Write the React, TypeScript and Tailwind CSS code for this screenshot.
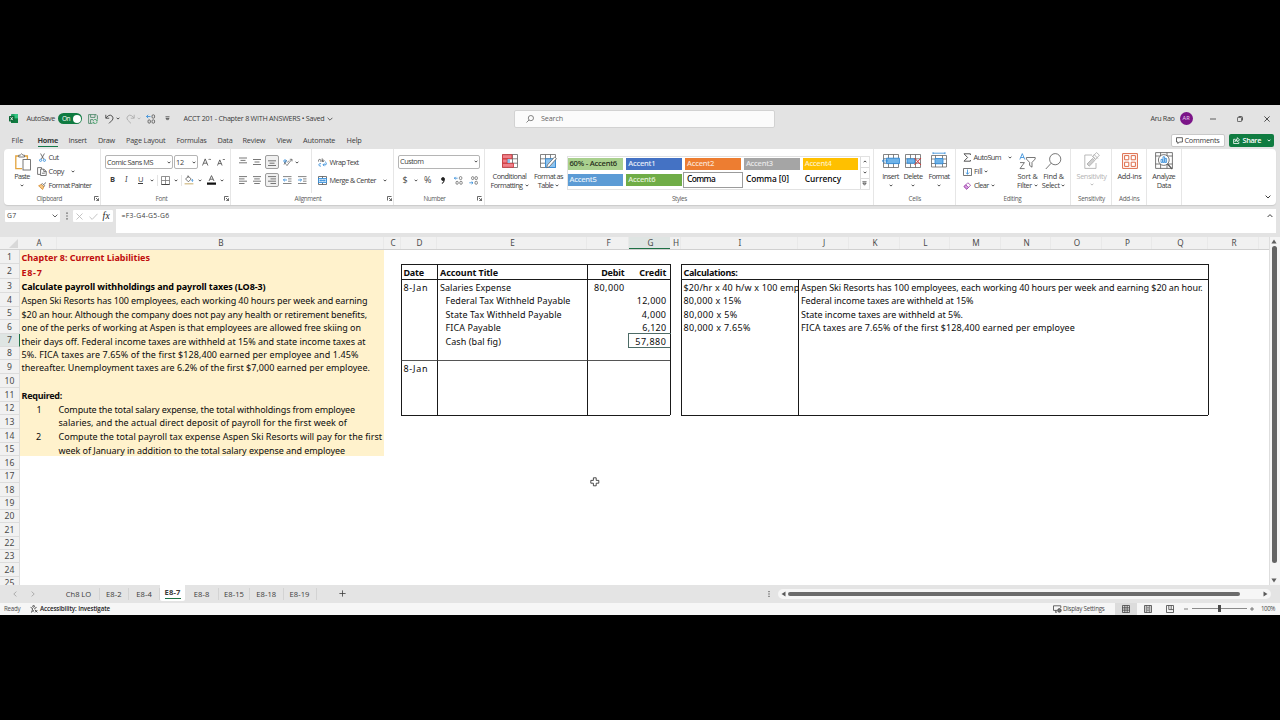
import { useLayoutEffect, useRef } from "react";
import type { ReactNode } from "react";
import clsx from "clsx";

type LabelProps = { children: string; w: number; className?: string };

// One line of text, tracked so that it takes exactly `w` pixels
function Label({ children, w, className }: LabelProps) {
  const inner = useRef<HTMLSpanElement>(null);

  useLayoutEffect(() => {
    const el = inner.current;
    if (!el) return;
    el.style.letterSpacing = "0px";
    const natural = el.getBoundingClientRect().width;
    el.style.letterSpacing = `${(w - natural) / children.length}px`;
  }, [children, w]);

  return (
    <span className={clsx("block shrink-0 whitespace-pre", className)} style={{ width: w }}>
      <span ref={inner}>{children}</span>
    </span>
  );
}

type IconProps = { w: number; h: number; className?: string; children: ReactNode };

function Icon({ w, h, className, children }: IconProps) {
  return (
    <svg
      width={w}
      height={h}
      viewBox={`0 0 ${w} ${h}`}
      fill="none"
      stroke="currentColor"
      strokeWidth="0.8"
      className={clsx("block shrink-0", className)}
    >
      {children}
    </svg>
  );
}

function Chevron({ className }: { className?: string }) {
  return (
    <Icon w={4} h={3} className={className}>
      <path d="M0.6 0.7 2 2.1 3.4 0.7" strokeWidth="0.9" />
    </Icon>
  );
}

function Launcher() {
  return (
    <Icon w={5} h={5} className="text-[#444]">
      <path d="M0.5 4.5V0.5H4.5M2 2 4.5 4.5M4.6 2.2V4.6H2.2" />
    </Icon>
  );
}

/* ---------- Title bar ---------- */

function TitleBar() {
  return (
    <div className="flex h-[27px] items-center text-[7.2px] text-[#3c3c3c]">
      <div className="flex w-[513.5px] items-center pl-[9px]">
        <Icon w={9} h={9} className="text-white">
          <rect x="2" y="0" width="7" height="9" rx="0.8" fill="#21a366" stroke="none" />
          <path d="M5.5 0H9V4.5H5.5z" fill="#33c481" stroke="none" />
          <path d="M2 4.5H9V9H2z" fill="#107c41" stroke="none" />
          <rect x="0" y="2" width="5.4" height="5.4" rx="0.6" fill="#0b6634" stroke="none" />
          <path d="M1.6 3.2 3.8 6.2M3.8 3.2 1.6 6.2" />
        </Icon>
        <Label w={28.5} className="ml-[8.5px]">AutoSave</Label>
        <div className="ml-[3px] flex h-[11px] w-[24px] items-center justify-between rounded-full bg-[#0f7b41] pr-[1.5px] pl-[4px]">
          <Label w={8} className="text-[6.5px] text-white">On</Label>
          <div className="size-[8px] rounded-full bg-white" />
        </div>
        <Icon w={10} h={10} className="ml-[6px] text-[#3d7f5c]">
          <path d="M0.6 0.6H8.2L9.4 1.8V5M0.6 0.6V9.4H4M2.6 0.8V3.4H7V0.8M2.6 9V5.6H5" />
          <path d="M5 7.2a2.1 2.1 0 0 1 4-0.6M9.2 7.6a2.1 2.1 0 0 1-4 0.8M9.2 5.2V6.8H7.8M5 9.8V8.3H6.4" stroke="#3a9b62" />
        </Icon>
        <Icon w={9} h={10} className="ml-[6.5px] text-[#444]">
          <path d="M0.8 0.8V4.2H4.2M0.9 4 3.2 1.8A3 3 0 0 1 7.4 6L4 9.4" strokeWidth="0.9" />
        </Icon>
        <Chevron className="ml-[2px]" />
        <Icon w={9} h={10} className="ml-[6px] text-[#adadad]">
          <path d="M8.2 0.8V4.2H4.8M8.1 4 5.8 1.8A3 3 0 0 0 1.6 6L5 9.4" strokeWidth="0.9" />
        </Icon>
        <Chevron className="ml-[2px] text-[#b5b5b5]" />
        <Icon w={10} h={10} className="ml-[5.5px] text-[#555]">
          <path d="M0.5 2.5H4.5M2.2 0.8 0.5 2.5 2.2 4.2" stroke="#2b88d8" />
          <rect x="6" y="0.8" width="2.6" height="3.4" rx="1.2" />
          <rect x="2" y="5.8" width="2.4" height="3.4" rx="1.2" />
          <rect x="6" y="5.8" width="2.6" height="3.4" rx="1.2" />
        </Icon>
        <Icon w={5} h={5} className="ml-[8.5px]">
          <path d="M0.5 0.8H4.5M1 2.6 2.5 4.1 4 2.6z" />
        </Icon>
        <Label w={141} className="ml-[14px]">ACCT 201 - Chapter 8 WITH ANSWERS • Saved</Label>
        <Icon w={6} h={4} className="ml-[2px]">
          <path d="M0.6 0.8 3 3.2 5.4 0.8" />
        </Icon>
      </div>

      <div className="flex h-[18px] w-[261.5px] items-center rounded-[2px] border border-[#d2d2d2] bg-[#fbfbfb] pl-[11px] text-[#666]">
        <Icon w={8} h={8}>
          <circle cx="4.9" cy="3.1" r="2.6" />
          <path d="M3 5 0.5 7.5" />
        </Icon>
        <Label w={22} className="ml-[7.5px]">Search</Label>
      </div>

      <div className="ml-auto flex items-center pr-[10.5px]">
        <Label w={24}>Aru Rao</Label>
        <div className="ml-[5px] flex size-[13.5px] items-center justify-center rounded-full bg-[#7b1588]">
          <Label w={7.5} className="text-[5.6px] text-[#ecd5f0]">AR</Label>
        </div>
        <Icon w={6} h={6} className="ml-[17px]">
          <path d="M0 3H6" />
        </Icon>
        <Icon w={6} h={6} className="ml-[20.5px]">
          <rect x="0.4" y="1.4" width="4.2" height="4.2" rx="0.8" />
          <path d="M1.6 0.5H4.4Q5.5 0.5 5.5 1.6V4.4" />
        </Icon>
        <Icon w={6} h={6} className="ml-[21px]">
          <path d="M0.4 0.4 5.6 5.6M5.6 0.4 0.4 5.6" strokeWidth="0.9" />
        </Icon>
      </div>
    </div>
  );
}

/* ---------- Ribbon tabs ---------- */

const ribbonTabs = [
  { name: "File", w: 12, slot: 26 },
  { name: "Home", w: 20.5, slot: 31 },
  { name: "Insert", w: 18, slot: 29.5 },
  { name: "Draw", w: 17, slot: 28 },
  { name: "Page Layout", w: 39.5, slot: 50.5 },
  { name: "Formulas", w: 30, slot: 41 },
  { name: "Data", w: 15, slot: 25 },
  { name: "Review", w: 22.8, slot: 34 },
  { name: "View", w: 15.3, slot: 26.5 },
  { name: "Automate", w: 32.3, slot: 43.5 },
  { name: "Help", w: 15.2, slot: 20 },
];

function RibbonTabs() {
  return (
    <div className="flex h-[17px] items-center text-[7.3px] text-[#3c3c3c]">
      <nav className="flex h-full pl-[11.5px]">
        {ribbonTabs.map((tab) => (
          <div key={tab.name} className="pt-[3px]" style={{ width: tab.slot }}>
            <div
              className={clsx("h-[12px] w-fit leading-[11.5px]", tab.name === "Home" && "border-b-[1.3px] border-[#16794a] font-bold")}
            >
              <Label w={tab.w}>{tab.name}</Label>
            </div>
          </div>
        ))}
      </nav>
      <div className="ml-auto flex items-center gap-[4.5px] pr-[6.5px]">
        <div className="flex h-[13px] w-[53.5px] items-center rounded-[2px] border border-[#c9c9c9] bg-white pl-[4px]">
          <Icon w={7} h={7}>
            <path d="M0.5 0.7H6.4V5H3.4L1.9 6.5V5H0.5z" />
          </Icon>
          <Label w={35} className="ml-[1.5px]">Comments</Label>
        </div>
        <div className="flex h-[13.5px] w-[44.5px] items-center rounded-[2px] bg-[#107c41] pl-[4px] text-white">
          <Icon w={7} h={7}>
            <path d="M2.5 2.3H0.6V6.5H5.8V4.8M2 4.7Q2.2 2.4 4.2 2.2V0.7L6.6 2.8 4.2 4.8V3.4Q2.8 3.4 2 4.7z" />
          </Icon>
          <Label w={18.5} className="ml-[2.5px] font-semibold">Share</Label>
          <Chevron className="ml-[5.5px]" />
        </div>
      </div>
    </div>
  );
}

/* ---------- Ribbon ---------- */

type GroupProps = {
  className: string;
  label?: string;
  labelWidth?: number;
  labelClass?: string;
  launcher?: boolean;
  children: ReactNode;
};

function Group({ className, label, labelWidth = 0, labelClass, launcher, children }: GroupProps) {
  return (
    <div className={clsx("flex shrink-0 flex-col border-r border-[#e6e6e6]", className)}>
      <div className="flex h-[44px]">{children}</div>
      <div className="flex h-[11px] items-center pr-[1.5px] text-[6.3px] text-[#5c5c5c]">
        {label && (
          <Label w={labelWidth} className={labelClass}>
            {label}
          </Label>
        )}
        {launcher && (
          <div className="ml-auto">
            <Launcher />
          </div>
        )}
      </div>
    </div>
  );
}

function ClipboardGroup() {
  return (
    <Group className="w-[97px]" label="Clipboard" labelWidth={25.5} labelClass="ml-[32.5px]" launcher>
      <div className="flex w-[33px] flex-col items-center pt-[4px] pl-[5px]">
        <Icon w={16} h={18} className="text-[#555]">
          <path d="M7 15.6H0.8V3H3.6M9.6 3H12.4V6" stroke="#e3a33b" strokeWidth="1.3" />
          <path d="M3.7 4V2.2H5.2Q6.6-0.6 8 2.2H9.5V4z" fill="#fff" />
          <rect x="8" y="6.6" width="7.4" height="10.4" fill="#fff" />
        </Icon>
        <Label w={15.5} className="mt-[1px] -ml-[2px] leading-[9px]">Paste</Label>
        <Chevron className="mt-[2.5px] -ml-[2px]" />
      </div>
      <div className="flex flex-col pt-[1.5px]">
        <div className="flex h-[14.5px] items-center">
          <Icon w={7} h={9} className="ml-[2px] text-[#555]">
            <path d="M1.6 0.5 4.6 6M5.4 0.5 2.4 6" />
            <circle cx="1.6" cy="7.3" r="1.1" stroke="#2b88d8" />
            <circle cx="5.4" cy="7.3" r="1.1" stroke="#2b88d8" />
          </Icon>
          <Label w={10} className="ml-[2.5px]">Cut</Label>
        </div>
        <div className="flex h-[14.5px] items-center">
          <Icon w={10} h={9} className="text-[#555]">
            <path d="M3.4 7.4H0.6V0.6H4.6V2" />
            <path d="M3.6 2.2H7L9.2 4.4V8.5H3.6zM6.8 2.2V4.6H9.2M5 6.2H7.8" />
          </Icon>
          <Label w={15.5} className="ml-[1.5px]">Copy</Label>
          <Chevron className="ml-[7px]" />
        </div>
        <div className="flex h-[14.5px] items-center">
          <Icon w={9} h={8} className="ml-[1px] text-[#555]">
            <path d="M0.6 3.8 3.4 2.4 5.8 4.8 4.6 7.5z" fill="#f5c98a" stroke="#d88a2a" />
            <path d="M3.4 2.4 4.4 1.6 6.6 3.8 5.8 4.8M5.6 2.7 8 0.5" />
          </Icon>
          <Label w={43} className="ml-[1.5px]">Format Painter</Label>
        </div>
      </div>
    </Group>
  );
}

function FontGroup() {
  return (
    <Group className="w-[130px]" label="Font" labelWidth={12} labelClass="ml-[54.5px]" launcher>
      <div className="flex flex-col pt-[6px] pl-[4px]">
        <div className="flex h-[14px] items-center">
          <div className="flex h-[13.5px] w-[67.5px] items-center rounded-[2px] border border-[#b5b5b5] pl-[1px]">
            <Label w={46}>Comic Sans MS</Label>
            <Chevron className="ml-auto mr-[1px]" />
          </div>
          <div className="ml-[1.5px] flex h-[13.5px] w-[23.5px] items-center rounded-[2px] border border-[#b5b5b5] pl-[1px]">
            <Label w={8}>12</Label>
            <Chevron className="ml-auto mr-[1px]" />
          </div>
          <Icon w={9} h={8} className="ml-[4px] text-[#444]">
            <path d="M0.5 7.5 3.2 0.9 5.9 7.5M1.5 5.2H4.9M6.6 2 7.7 0.9 8.8 2" />
          </Icon>
          <Icon w={8} h={8} className="ml-[6px] text-[#444]">
            <path d="M0.5 7.5 2.8 1.9 5.1 7.5M1.3 5.6H4.3M5.8 1 6.8 2 7.8 1" />
          </Icon>
        </div>
        <div className="mt-[4px] flex h-[14px] items-center text-[7.6px]">
          <Label w={5} className="ml-[5px] font-bold">B</Label>
          <Label w={3.5} className="ml-[10px] font-serif italic">I</Label>
          <Label w={5} className="ml-[9.5px] underline">U</Label>
          <Chevron className="ml-[6.5px]" />
          <div className="ml-[3px] h-[11px] w-px bg-[#e4e4e4]" />
          <Icon w={9} h={9} className="ml-[3px] text-[#777]">
            <path d="M0.5 0.5H8.5V8.5H0.5zM4.5 0.5V8.5M0.5 4.5H8.5" />
            <path d="M0.5 8.5H8.5" stroke="#333" />
          </Icon>
          <Chevron className="ml-[4px]" />
          <div className="ml-[3px] h-[11px] w-px bg-[#e4e4e4]" />
          <Icon w={10} h={10} className="ml-[2px] text-[#555]">
            <path d="M1.6 4 4.4 1.2 7.2 4 4.4 6.8zM4 0.4V3" />
            <path d="M8.4 4.4Q9.6 6.2 8.4 6.4T8.4 4.4" stroke="#2b88d8" />
            <path d="M0.6 8.8H9.4" stroke="#d9c79b" strokeWidth="1.4" />
          </Icon>
          <Chevron className="ml-[4px]" />
          <Icon w={9} h={10} className="ml-[5px] text-[#444]">
            <path d="M2 6 4.5 0.6 7 6M2.9 4.2H6.1" />
            <path d="M0 8.7H9" stroke="#111" strokeWidth="2.2" />
          </Icon>
          <Chevron className="ml-[4.5px]" />
        </div>
      </div>
    </Group>
  );
}

function Lines({ d, className }: { d: string; className?: string }) {
  return (
    <Icon w={8} h={8} className={clsx("text-[#555]", className)}>
      <path d={d} />
    </Icon>
  );
}

function AlignmentGroup() {
  return (
    <Group className="w-[163px]" label="Alignment" labelWidth={27} labelClass="ml-[63.5px]" launcher>
      <div className="flex w-[81px] flex-col border-r border-[#e6e6e6] pt-[5.5px] pl-[8px]">
        <div className="flex h-[15px] items-center">
          <Lines d="M0 1H8M1.5 3.4H6.5M0 5.8H8" className="-mt-[3px]" />
          <Lines d="M0 1.5H8M1.5 4H6.5M0 6.5H8" className="ml-[6px]" />
          <div className="ml-[4px] flex size-[13.5px] items-center justify-center rounded-[2px] border border-[#9e9e9e] bg-[#f0f0f0]">
            <Lines d="M0 2.8H8M1.5 5.2H6.5M0 7.5H8" />
          </div>
          <Icon w={10} h={9} className="ml-[4.5px] text-[#666]">
            <path d="M1 6.6 3.6 2M3.4 6.8 1.2 4M4.2 4.6 6 2.6M8.8 1.4 3.6 8M6.8 1.3H9V3.4" />
            <circle cx="2" cy="3" r="1.2" stroke="#2b88d8" />
          </Icon>
          <Chevron className="ml-[2px]" />
        </div>
        <div className="mt-[3px] flex h-[15px] items-center">
          <Lines d="M0 0.6H8M0 2.9H5.5M0 5.2H8M0 7.5H5.5" />
          <Lines d="M0 0.6H8M1.2 2.9H6.8M0 5.2H8M1.2 7.5H6.8" className="ml-[6px]" />
          <div className="ml-[4px] flex size-[13.5px] items-center justify-center rounded-[2px] border border-[#9e9e9e] bg-[#f0f0f0]">
            <Lines d="M0 0.6H8M2.5 2.9H8M0 5.2H8M2.5 7.5H8" />
          </div>
          <Icon w={9} h={8} className="ml-[4.5px] text-[#666]">
            <path d="M0 0.6H8.5M5 2.9H8.5M5 5.2H8.5M0 7.5H8.5" />
            <path d="M0.4 4H4M1.8 2.6 0.4 4 1.8 5.4" stroke="#2b88d8" />
          </Icon>
          <Icon w={9} h={8} className="ml-[5.5px] text-[#666]">
            <path d="M0 0.6H8.5M5 2.9H8.5M5 5.2H8.5M0 7.5H8.5" />
            <path d="M0 4H3.6M2.2 2.6 3.6 4 2.2 5.4" stroke="#2b88d8" />
          </Icon>
        </div>
      </div>
      <div className="flex flex-col pt-[5.5px] pl-[6px]">
        <div className="flex h-[15px] items-center">
          <Icon w={9} h={9} className="text-[#555]">
            <path d="M0.6 3.6V2.2Q0.6 1.4 1.6 1.4T2.8 2.2V3.8M4.2 0.4V3.8M4.2 2.6Q5.8 1.2 6 2.6T4.2 3.4" />
            <path d="M3 5.6Q0.8 5.4 0.8 6.8T3 8.2M5 6.8H8Q9 4.4 7 3.6M6.4 5.4 5 6.8 6.4 8.2" stroke="#2b88d8" />
          </Icon>
          <Label w={29} className="ml-[2.5px]">Wrap Text</Label>
        </div>
        <div className="mt-[3px] flex h-[15px] items-center">
          <Icon w={9} h={9} className="text-[#555]">
            <path d="M0.5 0.5H8.5V8.5H0.5zM4.5 0.5V2.5M4.5 6.5V8.5" />
            <rect x="0.5" y="2.5" width="8" height="4" fill="#cfe5f7" stroke="#2b88d8" />
            <path d="M2 4.5H7M3 3.5 2 4.5 3 5.5M6 3.5 7 4.5 6 5.5" stroke="#2b88d8" />
          </Icon>
          <Label w={46.5} className="ml-[2.5px]">Merge &amp; Center</Label>
          <Chevron className="ml-[6.5px]" />
        </div>
      </div>
    </Group>
  );
}

function NumberGroup() {
  return (
    <Group className="w-[90.5px]" label="Number" labelWidth={22} labelClass="ml-[29.5px]" launcher>
      <div className="flex flex-col pt-[6px] pl-[4px]">
        <div className="flex h-[13.5px] w-[82px] items-center rounded-[2px] border border-[#b5b5b5] pl-[1px]">
          <Label w={23.5}>Custom</Label>
          <Chevron className="ml-auto mr-[1px]" />
        </div>
        <div className="mt-[4.5px] flex h-[14px] items-center text-[9px] text-[#444]">
          <Label w={5} className="ml-[4.5px]">$</Label>
          <Chevron className="ml-[6.5px]" />
          <Label w={8.5} className="ml-[6px]">%</Label>
          <Icon w={4} h={7} className="ml-[8px] text-[#222]">
            <circle cx="2" cy="2" r="1.5" fill="currentColor" />
            <path d="M3.3 2.4Q3.3 5 0.9 6.4" strokeWidth="1.1" />
          </Icon>
          <Icon w={9} h={9} className="ml-[9px] text-[#666]">
            <path d="M0.3 2.2H3.6M1.6 0.9 0.3 2.2 1.6 3.5" stroke="#2b88d8" />
            <rect x="5.4" y="0.6" width="2.4" height="3" rx="1.1" />
            <rect x="2" y="5.3" width="2.2" height="3" rx="1.1" />
            <rect x="5.8" y="5.3" width="2.4" height="3" rx="1.1" />
          </Icon>
          <Icon w={9} h={9} className="ml-[6px] text-[#666]">
            <path d="M0.3 6.8H4M2.6 5.5 4 6.8 2.6 8.1" stroke="#2b88d8" />
            <rect x="2.6" y="0.6" width="2.2" height="3" rx="1.1" />
            <rect x="6" y="0.6" width="2.4" height="3" rx="1.1" />
            <rect x="6" y="5.3" width="2.4" height="3" rx="1.1" />
          </Icon>
        </div>
      </div>
    </Group>
  );
}

const cellStyles = [
  { name: "60% - Accent6", w: 47.5, className: "bg-[#a9d08e] text-[#1f2a18]" },
  { name: "Accent1", w: 27, className: "bg-[#4472c4] text-[#e6edf8]" },
  { name: "Accent2", w: 27, className: "bg-[#ed7d31] text-[#fbe3d3]" },
  { name: "Accent3", w: 27, className: "bg-[#a5a5a5] text-[#e9e9e9]" },
  { name: "Accent4", w: 27, className: "bg-[#ffc000] text-[#fff0c4]" },
  { name: "Accent5", w: 27, className: "bg-[#5b9bd5] text-[#e6f1fa]" },
  { name: "Accent6", w: 27, className: "bg-[#70ad47] text-[#e5f2dc]" },
  { name: "Comma", w: 28, className: "bg-white text-black outline outline-[#9b9b9b] outline-offset-1 text-[8.4px]" },
  { name: "Comma [0]", w: 43, className: "bg-white text-black text-[8.4px]" },
  { name: "Currency", w: 36.5, className: "bg-white text-black text-[8.4px]" },
];

function StylesGroup() {
  return (
    <Group className="w-[389.5px]" label="Styles" labelWidth={15} labelClass="ml-[187.5px]">
      <div className="flex w-[46px] flex-col items-center pt-[5px] pl-[4px]">
        <Icon w={16} h={14} className="text-[#666]">
          <path d="M0.5 0.5H15.5V13.5H0.5zM5.5 0.5V13.5M10.5 0.5V13.5M0.5 4.8H15.5M0.5 9.2H15.5" />
          <path d="M0.5 0.7H10V4.6H0.5zM0.5 5H5.2V9H0.5zM0.5 9.4H11.5V13.3H0.5z" fill="#f0808a" stroke="#d13438" />
          <path d="M5.5 5H8V9H5.5z" fill="#8ec3ee" stroke="none" />
        </Icon>
        <Label w={34} className="mt-[3.5px] leading-[9px]">Conditional</Label>
        <div className="flex items-center">
          <Label w={32} className="leading-[9px]">Formatting</Label>
          <Chevron className="ml-[2px]" />
        </div>
      </div>
      <div className="flex w-[36px] flex-col items-center pt-[5px]">
        <Icon w={17} h={15} className="text-[#666]">
          <path d="M0.5 0.5H15.5V13.5H0.5zM5.5 0.5V13.5M10.5 0.5V13.5M0.5 4.8H15.5M0.5 9.2H15.5" />
          <path d="M5.5 4.8H15.5V13.5H5.5z" fill="#8ec3ee" stroke="#2b88d8" />
          <path d="M6.8 13.8 7.4 11 14.6 3 16.5 4.6 9.2 12.8z" fill="#fff" />
        </Icon>
        <Label w={29} className="mt-[2.5px] leading-[9px]">Format as</Label>
        <div className="flex items-center">
          <Label w={15.5} className="leading-[9px]">Table</Label>
          <Chevron className="ml-[2px]" />
        </div>
      </div>
      <div className="mt-[7px] flex h-[33.5px] w-[303px] border border-[#e2e2e2]">
        <div className="grid w-[292px] grid-cols-5 content-start gap-x-[3px] gap-y-[3.5px] pt-[1px] pr-[1px]">
          {cellStyles.map((style) => (
            <div key={style.name} className={clsx("flex h-[12px] items-center pl-[2px] font-[Comic_Sans_MS,Noto_Sans,sans-serif] text-[7.6px]", style.className)}>
              <Label w={style.w} className="font-medium">
                {style.name}
              </Label>
            </div>
          ))}
        </div>
        <div className="flex flex-1 flex-col divide-y divide-[#dcdcdc] border-l border-[#dcdcdc]">
          <div className="flex flex-1 items-center justify-center">
            <Chevron className="rotate-180" />
          </div>
          <div className="flex flex-1 items-center justify-center">
            <Chevron />
          </div>
          <div className="flex flex-1 items-center justify-center">
            <Icon w={5} h={5}>
              <path d="M0.4 0.8H4.6M0.9 2.2H4.1L2.5 4.2z" />
            </Icon>
          </div>
        </div>
      </div>
    </Group>
  );
}

function CellsGroup() {
  return (
    <Group className="w-[81.5px]" label="Cells" labelWidth={12.5} labelClass="ml-[34.5px]">
      <div className="flex w-[26px] flex-col items-center pt-[5px] pl-[7px]">
        <Icon w={18} h={14} className="text-[#666]">
          <path d="M1.5 0.5H16.5V13.5H1.5zM6.5 0.5V13.5M11.5 0.5V13.5M1.5 4.8H16.5M1.5 9.2H16.5" />
          <path d="M4.5 4.2H17.5V9.6H4.5z" fill="#6fb3e8" stroke="#2b88d8" />
          <path d="M0.4 6.9H6M2.6 4.6 0.4 6.9 2.6 9.2" stroke="#2b88d8" />
        </Icon>
        <Label w={16.5} className="mt-[4px] leading-[9px]">Insert</Label>
        <Chevron className="mt-[2.5px]" />
      </div>
      <div className="flex w-[25px] flex-col items-center pt-[5px] pl-px">
        <Icon w={17} h={14} className="ml-[1px] text-[#666]">
          <path d="M0.5 0.5H15.5V13.5H0.5zM5.5 0.5V13.5M10.5 0.5V13.5M0.5 4.8H15.5M0.5 9.2H15.5" />
          <path d="M2 4.8H9.5V9.2H2z" fill="#6fb3e8" stroke="#2b88d8" />
          <path d="M9.5 4 16 11M16 4 9.5 11" stroke="#d13438" strokeWidth="1" />
        </Icon>
        <Label w={19} className="mt-[4px] leading-[9px]">Delete</Label>
        <Chevron className="mt-[2.5px]" />
      </div>
      <div className="flex w-[27px] flex-col items-center pt-[3px] pl-px">
        <Icon w={16} h={16} className="text-[#666]">
          <path d="M0.5 3.5H15.5V15H0.5zM4.5 3.5V15M11.5 3.5V15M0.5 7H15.5M0.5 11.5H15.5" />
          <path d="M4 6.5H12V11.8H4z" fill="#6fb3e8" stroke="#2b88d8" />
          <path d="M2 0.2V2.2M14 0.2V2.2M2 1.2H14" stroke="#2b88d8" />
        </Icon>
        <Label w={21} className="mt-[3.5px] leading-[9px]">Format</Label>
        <Chevron className="mt-[3px]" />
      </div>
    </Group>
  );
}

function EditingGroup() {
  return (
    <Group className="w-[115.5px]" label="Editing" labelWidth={18} labelClass="ml-[48px]">
      <div className="flex w-[58px] flex-col pt-[1.5px] pl-[7px]">
        <div className="flex h-[14.5px] items-center">
          <Icon w={9} h={9} className="text-[#444]">
            <path d="M7.4 2V0.8H1L4.6 4.5 1 8.2H7.4V7" strokeWidth="0.9" />
          </Icon>
          <Label w={27.5} className="ml-[2px]">AutoSum</Label>
          <Chevron className="ml-[7px]" />
        </div>
        <div className="flex h-[14.5px] items-center">
          <Icon w={9} h={8} className="text-[#555]">
            <path d="M0.5 0.5H8.5V7.5H0.5z" />
            <path d="M4.5 1.5V6.2M2.8 4.5 4.5 6.2 6.2 4.5" stroke="#2b88d8" />
          </Icon>
          <Label w={8.5} className="ml-[2.5px]">Fill</Label>
          <Chevron className="ml-[1px]" />
        </div>
        <div className="flex h-[14.5px] items-center">
          <Icon w={9} h={8} className="text-[#9b3fa8]">
            <path d="M1 4.6 4.8 0.8 7.6 3.2 3.8 7.2z" />
            <path d="M1 4.6 2.7 2.8 5.6 5.4 3.8 7.2z" fill="#d79be0" />
          </Icon>
          <Label w={14.5} className="ml-[2.5px]">Clear</Label>
          <Chevron className="ml-[2px]" />
        </div>
      </div>
      <div className="flex w-[28px] flex-col items-center pt-[4px]">
        <Icon w={17} h={17} className="text-[#555]">
          <path d="M0.8 6.5 3.3 0.6 5.8 6.5M1.7 4.5H4.9" stroke="#2b88d8" />
          <path d="M1 9.6H5.4L1 15.6H5.6M7.4 4.5H16.2V6L13 9.4V14.2L10.6 12.4V9.4L7.4 6z" />
        </Icon>
        <Label w={20} className="mt-[1.5px] leading-[9px]">Sort &amp;</Label>
        <div className="flex items-center">
          <Label w={15} className="leading-[9px]">Filter</Label>
          <Chevron className="ml-[2px]" />
        </div>
      </div>
      <div className="flex w-[24px] flex-col items-center pt-[4px]">
        <Icon w={17} h={17} className="text-[#555]">
          <circle cx="10.2" cy="6.2" r="5.6" />
          <path d="M6.2 10.2 0.8 16" />
        </Icon>
        <Label w={20.5} className="mt-[1.5px] leading-[9px]">Find &amp;</Label>
        <div className="flex items-center">
          <Label w={18} className="leading-[9px]">Select</Label>
          <Chevron className="ml-[1.5px]" />
        </div>
      </div>
    </Group>
  );
}

function AddInGroups() {
  return (
    <>
      <Group className="w-[41px]" label="Sensitivity" labelWidth={27} labelClass="ml-[7px]">
        <div className="flex w-full flex-col items-center pt-[3px] pl-px text-[#b4b4b4]">
          <Icon w={16} h={17} className="text-[#a8a8a8]">
            <path d="M8 3H0.8V16.4H12V11" />
            <path d="M3 12 8.6 6.4 10.8 8.6 5.2 14.2z" fill="#cfcfcf" />
            <path d="M8.4 3.8 11.6 7.6M10 2.4 14 6.6M12.6 0.6 15.4 3.2 11.6 7.4 8.6 4.4z" />
          </Icon>
          <Label w={30} className="mt-[2.5px] leading-[9px]">Sensitivity</Label>
          <Chevron className="mt-[2.5px]" />
        </div>
      </Group>
      <Group className="w-[35px]" label="Add-ins" labelWidth={20.5} labelClass="ml-[7px]">
        <div className="flex w-full flex-col items-center pt-[4px] pl-px">
          <Icon w={16} h={16} className="text-[#dd6b48]">
            <path d="M0.6 0.6H15.4V15.4H0.6z" strokeWidth="1" />
            <path d="M2.6 2.6H6.8V6.8H2.6zM9.2 2.6H13.4V6.8H9.2zM2.6 9.2H6.8V13.4H2.6zM9.2 9.2H13.4V13.4H9.2z" strokeWidth="1" />
          </Icon>
          <Label w={24} className="mt-[2.5px] leading-[9px]">Add-ins</Label>
        </div>
      </Group>
      <Group className="w-[34.5px]">
        <div className="flex w-full flex-col items-center pt-[3px]">
          <Icon w={18} h={18} className="text-[#555]">
            <path d="M0.6 0.6H17.4V16.4H0.6zM0.6 4H17.4M0.6 12H17.4M5.6 0.6V16.4M12 0.6V16.4" />
            <circle cx="8.8" cy="8" r="5.4" fill="#fff" />
            <path d="M12.6 12 17.2 17.2" strokeWidth="1.2" />
            <path d="M6 7.4H7.6V10.4H6zM8 4.8H9.6V10.4H8zM10 6.4H11.6V10.4H10z" stroke="#2b88d8" />
          </Icon>
          <Label w={23} className="mt-[1.5px] leading-[9px]">Analyze</Label>
          <Label w={14} className="leading-[9px]">Data</Label>
        </div>
      </Group>
    </>
  );
}

function Ribbon() {
  return (
    <div className="mx-[4px] flex h-[55.5px] overflow-hidden rounded-[4px] bg-white text-[7.3px] text-[#3c3c3c] shadow-[0_1px_1px_#cacaca]">
      <ClipboardGroup />
      <FontGroup />
      <AlignmentGroup />
      <NumberGroup />
      <StylesGroup />
      <CellsGroup />
      <EditingGroup />
      <AddInGroups />
      <Icon w={6} h={4} className="mr-[5.5px] mb-[5.5px] ml-auto self-end">
        <path d="M0.6 0.6 3 3 5.4 0.6" strokeWidth="1" />
      </Icon>
    </div>
  );
}

/* ---------- Formula bar ---------- */

function FormulaBar() {
  return (
    <div className="flex h-[32.5px] items-start pt-[4.5px] pl-[5px] text-[6.8px] text-[#3c3c3c]">
      <div className="mt-[1px] flex h-[12px] w-[55px] items-center rounded-[1px] bg-white pr-[2px] pl-[2px]">
        <Label w={9.5}>G7</Label>
        <Icon w={6} h={4} className="ml-auto">
          <path d="M0.6 0.6 3 3 5.4 0.6" />
        </Icon>
      </div>
      <Icon w={2} h={8} className="mt-[3px] ml-[5.5px]">
        <path d="M1 0.5V1.7M1 3.4V4.6M1 6.3V7.5" strokeWidth="1.2" />
      </Icon>
      <div className="mt-[1px] ml-[5.5px] flex h-[12px] w-[40px] items-center rounded-[1px] bg-white pl-[3px] text-[#b5b5b5]">
        <Icon w={7} h={7}>
          <path d="M0.5 0.5 6.5 6.5M6.5 0.5 0.5 6.5" />
        </Icon>
        <Icon w={9} h={7} className="ml-[5.5px]">
          <path d="M0.5 3.8 3.2 6.4 8.5 0.8" />
        </Icon>
        <Label w={7.5} className="ml-[5px] font-['Liberation_Serif',serif] text-[9.5px] text-[#222] italic">fx</Label>
      </div>
      <div className="ml-[3px] flex h-[23.5px] flex-1 items-start bg-white pt-[1px] pr-[3px] pl-[5.5px]">
        <Label w={48} className="leading-[12px]">=F3-G4-G5-G6</Label>
        <Icon w={6} h={4} className="mt-[4px] ml-auto">
          <path d="M0.6 3 3 0.6 5.4 3" strokeWidth="1" />
        </Icon>
      </div>
      <div className="w-[4px]" />
    </div>
  );
}

/* ---------- Sheet ---------- */

const columns = [
  { id: "A", w: 37 },
  { id: "B", w: 327 },
  { id: "C", w: 17 },
  { id: "D", w: 36 },
  { id: "E", w: 150 },
  { id: "F", w: 42 },
  { id: "G", w: 41 },
  { id: "H", w: 11 },
  { id: "I", w: 117 },
  { id: "J", w: 51 },
  { id: "K", w: 51 },
  { id: "L", w: 50 },
  { id: "M", w: 51 },
  { id: "N", w: 50 },
  { id: "O", w: 51 },
  { id: "P", w: 50 },
  { id: "Q", w: 56 },
  { id: "R", w: 51 },
];

const rowHeights = [14, 15, 14, 14, 13, 14, 13, 13, 14, 14, 14, 13, 14, 14, 13, 14, 13, 14, 13, 13, 14, 13, 13, 14, 13];

type Cell = { text: string; w: number; className?: string };

const cells: Record<string, Cell> = {
  A1: { text: "Chapter 8: Current Liabilities", w: 128.5, className: "pl-[1.5px] font-bold text-[#c00d0d]" },
  A2: { text: "E8-7", w: 21, className: "pl-[1.5px] font-bold text-[#c00d0d]" },
  A3: { text: "Calculate payroll withholdings and payroll taxes (LO8-3)", w: 244, className: "pl-[1.5px] font-bold text-black" },
  A4: { text: "Aspen Ski Resorts has 100 employees, each working 40 hours per week and earning", w: 346, className: "pl-[1.5px]" },
  A5: { text: "$20 an hour. Although the company does not pay any health or retirement benefits,", w: 345.5, className: "pl-[1.5px]" },
  A6: { text: "one of the perks of working at Aspen is that employees are allowed free skiing on", w: 339.5, className: "pl-[1.5px]" },
  A7: { text: "their days off. Federal income taxes are withheld at 15% and state income taxes at", w: 344, className: "pl-[1.5px]" },
  A8: { text: "5%. FICA taxes are 7.65% of the first $128,400 earned per employee and 1.45%", w: 337, className: "pl-[1.5px]" },
  A9: { text: "thereafter. Unemployment taxes are 6.2% of the first $7,000 earned per employee.", w: 348.5, className: "pl-[1.5px]" },
  A11: { text: "Required:", w: 40.5, className: "pl-[1.5px] font-bold" },
  A12: { text: "1", w: 4, className: "justify-center" },
  A14: { text: "2", w: 5, className: "justify-center" },
  B12: { text: "Compute the total salary expense, the total withholdings from employee", w: 296.5, className: "pl-[1.5px]" },
  B13: { text: "salaries, and the actual direct deposit of payroll for the first week of", w: 288.5, className: "pl-[1.5px]" },
  B14: { text: "Compute the total payroll tax expense Aspen Ski Resorts will pay for the first", w: 323.5, className: "pl-[1.5px]" },
  B15: { text: "week of January in addition to the total salary expense and employee", w: 286.5, className: "pl-[1.5px]" },
  D2: { text: "Date", w: 20.3, className: "pl-[1.5px] font-bold" },
  E2: { text: "Account Title", w: 58, className: "pl-[2px] font-bold" },
  F2: { text: "Debit", w: 23.3, className: "justify-end pr-[4.5px] font-bold" },
  G2: { text: "Credit", w: 27, className: "justify-end pr-[3.7px] font-bold" },
  D3: { text: "8-Jan", w: 24.7, className: "pl-[1.5px]" },
  E3: { text: "Salaries Expense", w: 71, className: "pl-[2px]" },
  F3: { text: "80,000", w: 30.5, className: "justify-end pr-[4.5px]" },
  E4: { text: "Federal Tax Withheld Payable", w: 125, className: "pl-[7.5px]" },
  G4: { text: "12,000", w: 29.5, className: "justify-end pr-[3.7px]" },
  E5: { text: "State Tax Withheld Payable", w: 116.3, className: "pl-[7.5px]" },
  G5: { text: "4,000", w: 24.5, className: "justify-end pr-[3.7px]" },
  E6: { text: "FICA Payable", w: 55.5, className: "pl-[7.5px]" },
  G6: { text: "6,120", w: 24, className: "justify-end pr-[3.7px]" },
  E7: { text: "Cash (bal fig)", w: 55.5, className: "pl-[7.5px]" },
  G7: { text: "57,880", w: 31, className: "justify-end pr-[3.7px]" },
  D9: { text: "8-Jan", w: 24.7, className: "pl-[1.5px]" },
  I2: { text: "Calculations:", w: 54, className: "pl-[1.5px] font-bold" },
  I3: { text: "$20/hr x 40 h/w x 100 emp", w: 116, className: "overflow-hidden pl-[1.5px]" },
  I4: { text: "80,000 x 15%", w: 58, className: "pl-[1.5px]" },
  I5: { text: "80,000 x 5%", w: 54, className: "pl-[1.5px]" },
  I6: { text: "80,000 x 7.65%", w: 67.3, className: "pl-[1.5px]" },
  J3: { text: "Aspen Ski Resorts has 100 employees, each working 40 hours per week and earning $20 an hour.", w: 401.5, className: "pl-[2px]" },
  J4: { text: "Federal income taxes are withheld at 15%", w: 172.5, className: "pl-[2px]" },
  J5: { text: "State income taxes are withheld at 5%.", w: 162, className: "pl-[2px]" },
  J6: { text: "FICA taxes are 7.65% of the first $128,400 earned per employee", w: 274, className: "pl-[2px]" },
};

// Outlines of the journal (D:G) and of the calculations box (I:Q)
function cellBorders(col: string, row: number) {
  if (row < 2 || row > 12) return "";
  const journal = "DEFG".includes(col);
  const calc = "IJKLMNOPQ".includes(col);

  return clsx(
    "border-[#1a1a1a]",
    (journal || calc) && (row === 2 || row === 3) && "border-t",
    (journal || calc) && row === 12 && "shadow-[0_1px_0_#1a1a1a]",
    journal && row === 9 && "border-t border-t-[#555]",
    "DEFHIR".includes(col) && "border-l",
    col === "J" && row > 2 && "border-l",
  );
}

function ColumnHeaders() {
  return (
    <div className="flex h-[13px] border-b border-[#d0d0d0] bg-[#f1f1f1] text-[8.2px] text-[#4a4a4a]">
      <div className="flex w-[20px] items-end justify-end pr-[2px] pb-[1px]">
        <Icon w={9} h={9} className="text-[#d8d8d8]">
          <path d="M9 0V9H0z" fill="currentColor" stroke="none" />
        </Icon>
      </div>
      {columns.map((column) => (
        <div
          key={column.id}
          className={clsx(
            "flex shrink-0 items-center justify-center pt-px pl-[2px]",
            column.id === "G" ? "border-b border-[#1e7145] bg-[#dfe5e3]" : "border-r border-[#e9e9e9]",
          )}
          style={{ width: column.w }}
        >
          {column.id}
        </div>
      ))}
    </div>
  );
}

function Sheet() {
  return (
    <div className="flex h-[348px]">
      <div className="h-full w-[1269px] overflow-hidden bg-white font-[Comic_Sans_MS,Noto_Sans,sans-serif]">
        <ColumnHeaders />
        {rowHeights.map((height, index) => {
          const row = index + 1;
          return (
            <div key={row} className="flex" style={{ height }}>
              <div
                className={clsx(
                  "flex w-[20px] shrink-0 items-center justify-center border-r border-b border-[#dcdcdc] pt-px text-[8.6px] text-[#4a4a4a]",
                  row === 7 ? "border-r-[#1e7145] bg-[#dfe5e3]" : "bg-[#f1f1f1]",
                )}
              >
                {row}
              </div>
              {columns.map((column) => {
                const cell = cells[`${column.id}${row}`];
                const yellow = "AB".includes(column.id) && row <= 15;
                return (
                  <div
                    key={column.id}
                    className={clsx(
                      "flex shrink-0 items-center pt-px text-[9px] leading-none",
                      !cell?.className?.includes("text-[#c00d0d]") && "text-[#0c0c0c]",
                      yellow && "bg-[#fff2cc]",
                      cellBorders(column.id, row),
                      column.id === "G" && row === 7 && "outline outline-[#4d6b66]",
                      cell?.className,
                    )}
                    style={{ width: column.w }}
                  >
                    {cell && (
                      <Label w={cell.w} className="relative z-10">
                        {cell.text}
                      </Label>
                    )}
                  </div>
                );
              })}
            </div>
          );
        })}
      </div>
      <div className="flex flex-1 flex-col items-center border-l border-[#dedede] bg-[#f4f4f4] pt-[2px] pr-[1.5px]">
        <Icon w={6} h={5} className="text-[#5f5f5f]">
          <path d="M3 0.5 5.6 4.5H0.4z" fill="currentColor" stroke="none" />
        </Icon>
        <div className="mt-[2px] h-[317px] w-[4.5px] rounded-full bg-[#636363]" />
        <Icon w={6} h={5} className="mt-auto mb-[2px] text-[#5f5f5f]">
          <path d="M3 4.5 5.6 0.5H0.4z" fill="currentColor" stroke="none" />
        </Icon>
      </div>
    </div>
  );
}

/* ---------- Sheet tabs and status bar ---------- */

const sheetTabs = [
  { name: "Ch8 LO", w: 25.3, slot: 41 },
  { name: "E8-2", w: 15.7, slot: 29.5 },
  { name: "E8-4", w: 15.7, slot: 31 },
  { name: "E8-7", w: 16, slot: 25 },
  { name: "E8-8", w: 15.7, slot: 34 },
  { name: "E8-15", w: 20, slot: 31 },
  { name: "E8-18", w: 20, slot: 33.5 },
  { name: "E8-19", w: 20, slot: 33 },
];

function SheetTabs() {
  return (
    <div className="flex h-[17.5px] items-center bg-[#e4e4e4] text-[7.6px] text-[#3c3c3c]">
      <Icon w={4} h={6} className="ml-[12.5px] text-[#a0a0a0]">
        <path d="M3.4 0.6 0.8 3 3.4 5.4" />
      </Icon>
      <Icon w={4} h={6} className="ml-[14.5px] text-[#a0a0a0]">
        <path d="M0.6 0.6 3.2 3 0.6 5.4" />
      </Icon>
      <div className="ml-[23.5px] flex h-full">
        {sheetTabs.map((tab) =>
          tab.name === "E8-7" ? (
            <div key={tab.name} className="flex h-[15.5px] justify-center rounded-b-[2px] bg-white" style={{ width: tab.slot }}>
              <div className="mt-[2px] h-[11.5px] border-b border-[#1e7145] leading-[11px] font-bold">
                <Label w={tab.w}>{tab.name}</Label>
              </div>
            </div>
          ) : (
            <div
              key={tab.name}
              className="my-[3px] flex items-center justify-center border-r border-[#d3d3d3] pt-[1px]"
              style={{ width: tab.slot }}
            >
              <Label w={tab.w}>{tab.name}</Label>
            </div>
          ),
        )}
      </div>
      <Icon w={7} h={7} className="ml-[22px]">
        <path d="M3.5 0.4V6.6M0.4 3.5H6.6" />
      </Icon>
      <Icon w={2} h={6} className="ml-auto">
        <path d="M1 0V1.2M1 2.4V3.6M1 4.8V6" strokeWidth="1" />
      </Icon>
      <div className="mr-[9.5px] ml-[8px] flex h-[9.5px] w-[492.5px] items-center rounded-full bg-[#f6f6f6] px-[2.5px] text-[#5a5a5a]">
        <Icon w={5} h={6}>
          <path d="M4.5 0.4V5.6L0.5 3z" fill="currentColor" stroke="none" />
        </Icon>
        <div className="ml-[2px] h-[4.5px] w-[452px] rounded-full bg-[#6b6b6b]" />
        <Icon w={5} h={6} className="ml-auto">
          <path d="M0.5 0.4V5.6L4.5 3z" fill="currentColor" stroke="none" />
        </Icon>
      </div>
    </div>
  );
}

function StatusBar() {
  return (
    <div className="flex h-[12.5px] items-center bg-[#f6f6f6] text-[6.2px] text-[#4a4a4a]">
      <Label w={16.5} className="ml-[4px]">Ready</Label>
      <Icon w={8} h={8} className="ml-[9.5px] text-[#333]">
        <circle cx="3.6" cy="1.3" r="0.9" />
        <path d="M0.6 2.4 2.4 3.2V5L1.4 7.6M6.6 2.4 4.8 3.2V4.4M3.6 5.2 2.8 7M5 5 7.4 7.4M7.4 5 5 7.4" />
      </Icon>
      <Label w={70} className="ml-[2px] font-semibold text-[#222]">Accessibility: Investigate</Label>
      <Icon w={9} h={8} className="ml-auto text-[#444]">
        <path d="M4 5.4H0.5V0.8H7.8V3M2 7.2H4M2.8 5.4V7" />
        <circle cx="6.4" cy="5.4" r="1.8" fill="#777" />
      </Icon>
      <Label w={41.5} className="ml-[1px]">Display Settings</Label>
      <div className="ml-[10.5px] flex h-full w-[22px] items-center justify-center bg-[#dcdcdc]">
        <Icon w={8} h={8} className="text-[#444]">
          <path d="M0.5 0.5H7.5V7.5H0.5zM2.8 0.5V7.5M5.2 0.5V7.5M0.5 2.8H7.5M0.5 5.2H7.5" />
        </Icon>
      </div>
      <Icon w={8} h={8} className="ml-[7px] text-[#444]">
        <path d="M0.5 0.5H7.5V7.5H0.5zM2.2 0.5V7.5M5.8 0.5V7.5M2.8 2.2H5.2M2.8 4H5.2M2.8 5.8H5.2" />
      </Icon>
      <Icon w={8} h={8} className="ml-[14px] text-[#444]">
        <path d="M0.5 0.5H7.5V7.5H0.5zM2.8 0.5V4.6H7.5M5.2 0.5V4.6" />
      </Icon>
      <Icon w={4} h={4} className="ml-[10px]">
        <path d="M0 2H4" strokeWidth="0.7" />
      </Icon>
      <div className="ml-[4px] flex h-[8px] w-[55px] items-center">
        <div className="h-px w-[26px] bg-[#8a8a8a]" />
        <div className="h-[7px] w-[2.5px] bg-[#4a4a4a]" />
        <div className="h-px flex-1 bg-[#8a8a8a]" />
      </div>
      <Icon w={4} h={4} className="ml-[3px]">
        <path d="M2 0V4M0 2H4" strokeWidth="0.7" />
      </Icon>
      <Label w={14} className="mr-[5px] ml-[7px]">100%</Label>
    </div>
  );
}

export default function App() {
  return (
    <div className="relative h-[720px] w-[1280px] overflow-hidden bg-black pt-[105px] font-['Open_Sans','Noto_Sans',sans-serif]">
      <div className="h-[510px] bg-[#e3e3e3]">
        <TitleBar />
        <RibbonTabs />
        <Ribbon />
        <FormulaBar />
        <Sheet />
        <SheetTabs />
        <StatusBar />
      </div>

      {/* Cell pointer */}
      <Icon w={10} h={10} className="absolute top-[477px] left-[589.5px] text-[#222]">
        <path d="M3.4 0.8H6.2V3.4H8.8V6.2H6.2V8.8H3.4V6.2H0.8V3.4H3.4z" fill="#fff" />
      </Icon>
    </div>
  );
}
